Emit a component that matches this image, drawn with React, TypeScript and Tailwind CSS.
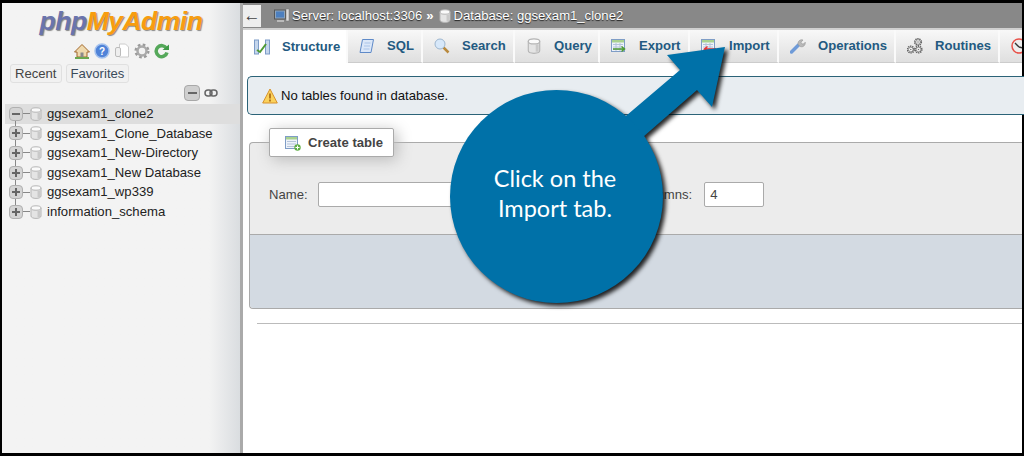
import React from 'react';

const Sans = '[font-family:"Liberation_Sans",Arial,sans-serif]';

const DbIcon = ({ className = '' }: { className?: string }) => (
  <svg viewBox="0 0 12 14" className={className}>
    <path d="M1 3v8c0 1.500 2.200 2.400 5 2.400s5-.9 5-2.400V3z" fill="#e4e4e4" stroke="#b5b5b5" />
    <ellipse cx="6" cy="3" rx="5" ry="2.200" fill="#fafafa" stroke="#b5b5b5" />
    <rect x="7.500" y="5.500" width="2.500" height="6.500" fill="#c9c9c9" />
  </svg>
);

const TreeToggle = ({ open }: { open?: boolean }) => (
  <span className="relative z-10 flex h-[14px] w-[14px] shrink-0 items-center justify-center rounded-[4px] border border-[#b0b0b0] bg-[#d4d4d4]">
    <span className="absolute h-[2px] w-[8px] bg-[#666]" />
    {!open && <span className="absolute h-[8px] w-[2px] bg-[#666]" />}
  </span>
);

const databases = [
  'ggsexam1_clone2',
  'ggsexam1_Clone_Database',
  'ggsexam1_New-Directory',
  'ggsexam1_New Database',
  'ggsexam1_wp339',
  'information_schema',
];

const StructureIcon = () => (
  <svg viewBox="0 0 16 16" className="h-4 w-4">
    <rect x="0.500" y="1" width="4" height="14" fill="#c5d6ec" stroke="#7d9cc8" />
    <rect x="11.500" y="1" width="4" height="14" fill="#c5d6ec" stroke="#7d9cc8" />
    <path d="M3 11l3 2 6-8" fill="none" stroke="#4e9a32" strokeWidth="2" />
  </svg>
);
const SqlIcon = () => (
  <svg viewBox="0 0 16 16" className="h-4 w-4">
    <path d="M3.500 1.500h11l-2.500 13H1z" fill="#dbe7f8" stroke="#5f8ac8" />
    <path d="M5.500 5h6M5 8h6M4.500 11h6" stroke="#a9c3e8" />
  </svg>
);
const SearchIcon = () => (
  <svg viewBox="0 0 16 16" className="h-4 w-4">
    <path d="M9.500 9.500l5 5" stroke="#b98a3e" strokeWidth="2.500" />
    <circle cx="6" cy="6" r="5" fill="#d7e8fa" stroke="#9db6cf" />
  </svg>
);
const TableIcon = ({ arrow, color }: { arrow?: 'in' | 'out'; color?: string }) => (
  <svg viewBox="0 0 16 16" className="h-4 w-4">
    <rect x="0.500" y="1.500" width="13" height="12" fill="#eef3fa" stroke="#7f9dc6" />
    <rect x="1" y="2" width="12" height="2.500" fill="#a9d28f" />
    <path d="M2 6.500h10M2 9h10M2 11.500h10M5 5v8M9 5v8" stroke="#b5c4da" />
    {arrow === 'out' && <path d="M2 11h11m-2.500-2.500L13.500 11l-3 2.500" fill="none" stroke={color} strokeWidth="1.500" />}
    {arrow === 'in' && <path d="M15 11H4m2.500-2.500L3.500 11l3 2.500" fill="none" stroke={color} strokeWidth="1.500" />}
  </svg>
);
const WrenchIcon = () => (
  <svg viewBox="0 0 16 16" className="h-[18px] w-[18px]">
    <path d="M1.500 14l7-7" stroke="#6f9bd8" strokeWidth="3.500" strokeLinecap="round" />
    <path d="M8 6.500c-.5-3 2-5.500 5-4.500L11 4.200l1 1.800 2-.2 1.200-1.600c.6 3-2.200 5.500-5 4.300z" fill="#b9b9b9" stroke="#8a8a8a" strokeWidth="0.500" />
  </svg>
);
const Gear = ({ cx, cy }: { cx: number; cy: number }) => (
  <g>
    <circle cx={cx} cy={cy} r="3.200" fill="none" stroke="#666" strokeWidth="1.800" strokeDasharray="1.300 0.700" />
    <circle cx={cx} cy={cy} r="2.200" fill="#fff" stroke="#777" strokeWidth="0.700" />
    <circle cx={cx} cy={cy} r="0.800" fill="#777" />
  </g>
);
const GearsIcon = () => (
  <svg viewBox="0 0 16 16" className="h-[18px] w-[18px]">
    <Gear cx={11} cy={4} />
    <Gear cx={3.800} cy={11.500} />
    <Gear cx={11.500} cy={11.500} />
  </svg>
);
const ClockIcon = () => (
  <svg viewBox="0 0 16 16" className="h-4 w-4 shrink-0">
    <circle cx="8" cy="8" r="7" fill="#eee" stroke="#e8524a" strokeWidth="1.500" />
    <path d="M8 9L4 5M8 9l4 1" stroke="#333" strokeWidth="1.400" />
  </svg>
);

const tabs = [
  { label: 'Structure', icon: <StructureIcon />, w: 'w-[105px]', active: true },
  { label: 'SQL', icon: <SqlIcon />, w: 'w-[75px]' },
  { label: 'Search', icon: <SearchIcon />, w: 'w-[92px]' },
  { label: 'Query', icon: <DbIcon className="h-4 w-4" />, w: 'w-[85px]' },
  { label: 'Export', icon: <TableIcon arrow="out" color="#4e9a32" />, w: 'w-[90px]' },
  { label: 'Import', icon: <TableIcon arrow="in" color="#e33" />, w: 'w-[89px]' },
  { label: 'Operations', icon: <WrenchIcon />, w: 'w-[117px]' },
  { label: 'Routines', icon: <GearsIcon />, w: 'w-[104px]' },
];

export default function App() {
  return (
    <div className={`relative flex h-[456px] w-[1024px] overflow-hidden bg-black pt-[3px] pr-[2px] pb-[3px] pl-[2px] ${Sans}`}>
      {/* navigation panel */}
      <aside className="flex h-full w-[238px] shrink-0 flex-col bg-gradient-to-r from-[#f3f3f3] from-87% to-[#dadde0]">
        <div className="mt-[3px] text-center text-[26.500px] leading-[30px] font-bold italic tracking-[-0.500px] [text-shadow:1px_1px_1px_#888]">
          <span className="text-[#6a74ad]">php</span>
          <span className="text-[#f89d0f]">MyAdmin</span>
        </div>
        <div className="mt-[7px] flex items-center justify-center gap-[4px] pl-[2px]">
          <svg viewBox="0 0 16 16" className="h-4 w-4">
            <path d="M8 1.500L0.500 9h2.500v5h10V9h2.500z" fill="#efd9ad" stroke="#a0672a" strokeLinejoin="round" />
            <rect x="6.500" y="9.500" width="3" height="4.500" fill="#8a8a8a" />
            <rect x="1" y="14" width="14" height="2" fill="#6aa84f" />
          </svg>
          <svg viewBox="0 0 16 16" className="h-4 w-4">
            <circle cx="8" cy="8" r="7" fill="#4f83d8" stroke="#a4c2ee" strokeWidth="1.500" />
            <text x="8" y="12" textAnchor="middle" fontSize="10" fontWeight="bold" fill="#fff">?</text>
          </svg>
          <svg viewBox="0 0 16 16" className="h-4 w-4">
            <path d="M5.500 1h6l3 3v10h-9z" fill="#fff" stroke="#ccc" />
            <rect x="1.500" y="4.500" width="5" height="9" rx="1.500" fill="#eee" stroke="#bbb" />
          </svg>
          <svg viewBox="0 0 16 16" className="h-4 w-4">
            <circle cx="8" cy="8" r="5.800" fill="none" stroke="#9a9a9a" strokeWidth="3.500" strokeDasharray="2.400 2.150" />
            <circle cx="8" cy="8" r="4.500" fill="none" stroke="#aaa" strokeWidth="2.500" />
            <circle cx="8" cy="8" r="1.800" fill="#f2f2f2" />
          </svg>
          <svg viewBox="0 0 16 16" className="h-4 w-4">
            <path d="M12.500 5.500a5.500 5.500 0 1 0 .5 4" fill="none" stroke="#55a85a" strokeWidth="3.500" />
            <path d="M8.500 7h6.500V1.500z" fill="#3f9a48" />
          </svg>
        </div>
        <div className="mt-[5px] flex gap-[4px] pl-[8px] text-[13.100px] leading-[15px] text-[#444]">
          <span className="rounded-[3px] border border-[#e0e0e0] bg-[#f1f1f1] px-[4px] py-px">Recent</span>
          <span className="rounded-[3px] border border-[#e0e0e0] bg-[#f1f1f1] px-[4px] py-px text-[#3a4a5a]">Favorites</span>
        </div>
        <div className="mt-[2px] flex items-center justify-end gap-[4px] pr-[22px]">
          <span className="flex h-[16px] w-[16px] items-center justify-center rounded-[4px] border border-[#a8a8a8] bg-[#cfcfcf]">
            <span className="h-[2px] w-[9px] bg-[#666]" />
          </span>
          <svg viewBox="0 0 14 8" className="h-[8px] w-[14px]">
            <rect x="1" y="1" width="7" height="6" rx="3" fill="none" stroke="#666" strokeWidth="1.500" />
            <rect x="6" y="1" width="7" height="6" rx="3" fill="none" stroke="#666" strokeWidth="1.500" />
          </svg>
        </div>
        <ul className="relative mt-[3px] ml-[3px] w-[235px] text-[13.130px] leading-[19.600px] text-[#222]">
          {databases.map((name, i) => (
            <li key={name} className={`relative flex h-[19.600px] items-center pl-[4px] ${i === 0 ? 'bg-[#dedede]' : ''}`}>
              {i < databases.length - 1 && <span className="absolute top-[10px] left-[10px] h-[20px] w-px bg-[#888]" />}
              <TreeToggle open={i === 0} />
              <span className="h-px w-[7px] shrink-0 bg-[#888]" />
              <DbIcon className="h-[14px] w-[12px] shrink-0" />
              <span className="ml-[5px]">{name}</span>
            </li>
          ))}
        </ul>
      </aside>

      {/* main panel */}
      <main className="flex h-full min-w-0 flex-1 flex-col border-l-[3px] border-[#aaaaaa] bg-white">
        <div className="flex h-[27px] shrink-0 items-center border-b-2 border-[#d0d0d0] bg-[#888888] text-[13.100px] text-white">
          <span className="flex h-[22px] w-[18px] items-center justify-center bg-[#eeeeee] text-[17px] leading-none text-[#444]">←</span>
          <svg viewBox="0 0 16 16" className="ml-[13px] h-4 w-4">
            <rect x="0.500" y="2" width="11" height="9" fill="#8fa6bd" stroke="#555" />
            <rect x="2" y="3.500" width="8" height="6" fill="#4c7fbf" />
            <rect x="3" y="12" width="7" height="2" fill="#bbb" />
            <rect x="12" y="1" width="3" height="12" fill="#ddd" stroke="#777" strokeWidth="0.500" />
          </svg>
          <span className="ml-[2px] [text-shadow:0_1px_1px_#222]">Server: localhost:3306</span>
          <span className="ml-[4px] font-bold">»</span>
          <DbIcon className="ml-[5px] h-[14px] w-[12px]" />
          <span className="ml-[3px] [text-shadow:0_1px_1px_#222]">Database: ggsexam1_clone2</span>
        </div>

        <nav className="flex h-[33px] shrink-0 overflow-hidden">
          {tabs.map((t) => (
            <div
              key={t.label}
              className={`flex h-full shrink-0 items-center border-r-2 border-[#fafafa] pl-[11px] text-[13.100px] font-bold text-[#235a81] ${t.w} ${
                t.active ? 'bg-white' : 'border-b border-b-[#cccccc] bg-gradient-to-b from-[#f8f8f8] to-[#dfdfdf]'
              }`}
            >
              <span className="flex w-[16px] shrink-0 justify-center">{t.icon}</span>
              <span className="ml-[12px]">{t.label}</span>
            </div>
          ))}
          <div className="flex h-full flex-1 items-center border-b border-b-[#cccccc] bg-gradient-to-b from-[#f8f8f8] to-[#dfdfdf] pl-[11px]">
            <ClockIcon />
          </div>
        </nav>

        <div className="mt-[13px] ml-[4px] flex h-[39px] w-[800px] shrink-0 items-center rounded-l-[5px] border border-r-0 border-[#2b6378] bg-[#e8edf1] pl-[14px] text-[13.130px] text-[#111]">
          <svg viewBox="0 0 16 16" className="h-4 w-4 shrink-0">
            <path d="M8 1L0.700 15h14.600z" fill="#fbd25c" stroke="#d6912c" strokeLinejoin="round" />
            <path d="M8 5.500v5M8 11.500v2" stroke="#a86a17" strokeWidth="1.700" />
          </svg>
          <span className="ml-[3px]">No tables found in database.</span>
        </div>

        {/* create table fieldset */}
        <section className="relative mt-[27px] ml-[6px] flex h-[167px] shrink-0 flex-col rounded-l-[4px] border border-r-0 border-[#aaaaaa] bg-[#ececec]">
          <div className="absolute -top-[15px] left-[19px] flex h-[29px] w-[125px] items-center rounded-[2px] border border-[#aaaaaa] bg-white pl-[15px] text-[13.100px] font-bold text-[#444] shadow-[3px_3px_15px_#bbbbbb]">
            <svg viewBox="0 0 16 16" className="h-4 w-4">
              <rect x="0.500" y="1.500" width="12" height="12" fill="#eef3fa" stroke="#7f9dc6" />
              <rect x="1" y="2" width="11" height="2.500" fill="#a9d28f" />
              <path d="M2 6.500h9M2 9h9M2 11.500h9" stroke="#b5c4da" />
              <circle cx="12.500" cy="12.500" r="3.200" fill="#5fae45" />
              <path d="M12.500 10.500v4M10.500 12.500h4" stroke="#fff" />
            </svg>
            <span className="ml-[7px]">Create table</span>
          </div>
          <div className="flex h-[91px] shrink-0 items-center pt-[12px] pl-[19px] text-[13.100px] text-[#444]">
            <span>Name:</span>
            <span className="ml-[10px] h-[25px] w-[180px] rounded-[2px] border border-[#aaaaaa] bg-white" />
            <span className="ml-[159px]">umns:</span>
            <span className="ml-[12px] flex h-[25px] w-[60px] items-center rounded-[2px] border border-[#aaaaaa] bg-white pl-[5px]">4</span>
          </div>
          <div className="flex-1 rounded-bl-[4px] border-t border-[#aaaaaa] bg-[#d3dae2]" />
        </section>

        <div className="mt-[14px] ml-[14px] h-px shrink-0 bg-[#bbbbbb]" />
      </main>

      {/* callout */}
      <svg viewBox="0 0 1024 456" className="absolute top-0 left-0 h-[456px] w-[1024px] drop-shadow-[3px_3px_2px_rgba(0,0,0,0.85)]">
        <path d="M725 47L667 55L680 70L600 138L620 157L697 90L712 107Z" fill="#0071a8" />
        <circle cx="556.500" cy="196.500" r="106.500" fill="#0071a8" />
      </svg>
      <div className="absolute top-[163px] left-[451px] w-[208px] text-center [font-family:'Lato',sans-serif] text-[23.500px] leading-[30px] text-white">
        Click on the
        <br />
        Import tab.
      </div>
    </div>
  );
}
